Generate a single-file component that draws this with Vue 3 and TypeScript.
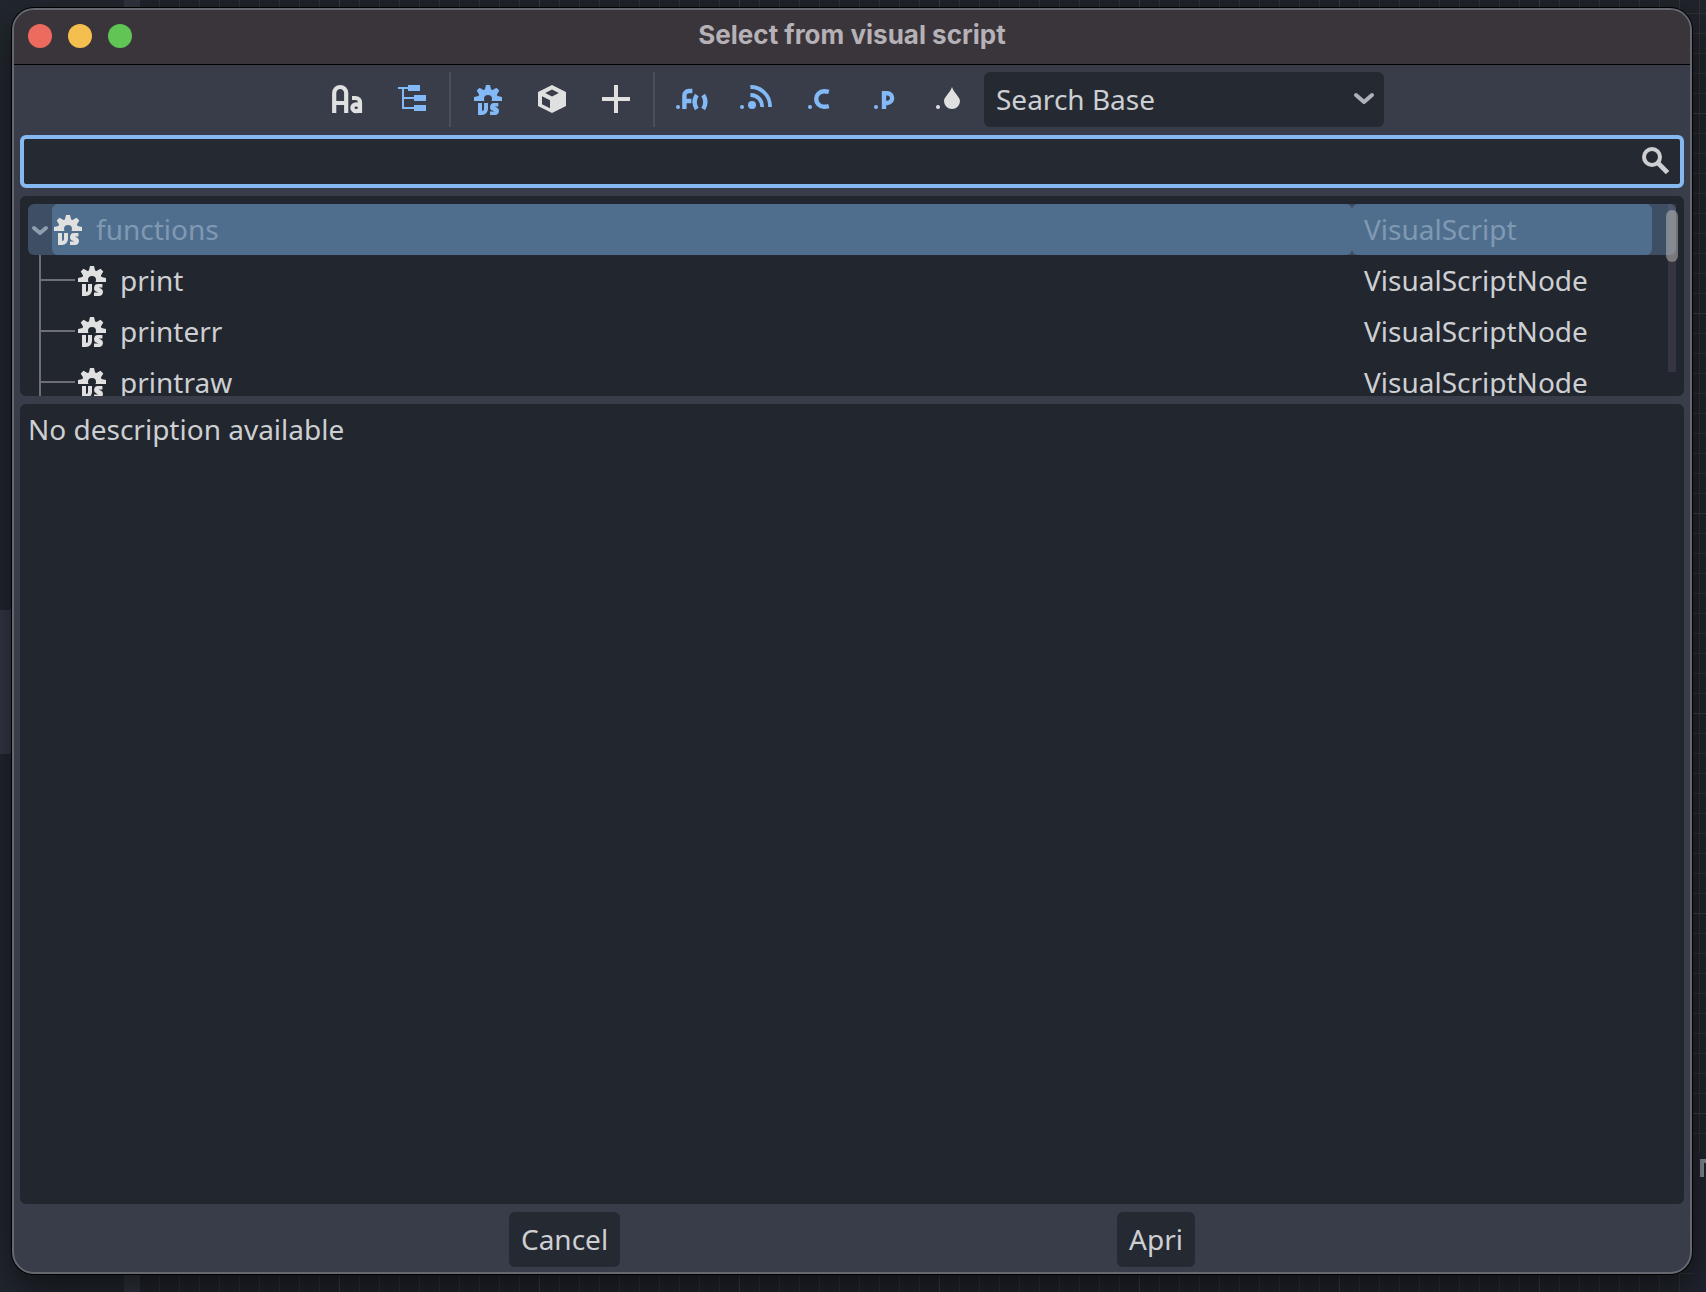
<script setup lang="ts">
import { ref } from 'vue'

interface TreeItem {
  name: string
  type: string
}

interface ToolIcon {
  label: string
  active: boolean
  fill?: string
  stroke?: string
  width?: number
  dot?: number
}

const gear =
  'M7 1l-.56 2.26a5 5 0 0 0-.69.28L3.76 2.34 2.35 3.76l1.19 1.99a5 5 0 0 0-.28.69L1 7v2h5.27A2 2 0 0 1 6 8a2 2 0 0 1 4 0 2 2 0 0 1-.27 1H15V7l-2.26-.56a5 5 0 0 0-.28-.69l1.2-1.99-1.42-1.41-1.99 1.19a5 5 0 0 0-.69-.28L9 1z' +
  'M3 10v6h2a3 3 0 0 0 3-3v-3H6v3a1 1 0 0 1-1 1v-4z' +
  'M13.2 10H11a2 2 0 0 0-.6 3.9l.9.3H9V16h2.5a2 2 0 0 0 .6-3.9l-.8-.3h1.9z'

const groups: ToolIcon[][] = [
  [
    {
      label: 'Match case',
      active: false,
      stroke: 'M1.1 15V5a3 3 0 0 1 6 0v10M1.1 10h6M10 7.5h1.8a2.2 2.2 0 0 1 2.2 2.2V15M14 12.4a1.8 1.6 0 1 1-3.8 0 1.8 1.6 0 1 1 3.8 0',
      width: 2.1,
    },
    {
      label: 'Inherited',
      active: true,
      fill: 'M1 2h5V1h6v3H6V3H4v4h5V6h6v3H9V8H4v4h5v-1h6v3H9v-1H3V3H1z',
    },
  ],
  [
    { label: 'Visual script nodes', active: true, fill: gear },
    {
      label: 'Classes',
      active: false,
      fill: 'M8 1l7 3.5v7L8 15l-7-3.5v-7zM8 3.3L4.6 5 8 6.7 11.4 5zM3 6.6v4l4 2v-4z',
    },
    { label: 'Operators', active: false, fill: 'M7 1h2v6h6v2H9v6H7V9H1V7h6z' },
  ],
  [
    {
      label: 'Methods',
      active: true,
      dot: 1,
      stroke: 'M4.2 13V6.2A2.2 2.2 0 0 1 6.4 4H8.2M4 9h3.7M10.4 6Q8.2 9.5 10.4 13M13.6 6Q15.8 9.5 13.6 13',
      width: 2.2,
    },
    {
      label: 'Signals',
      active: true,
      dot: 1,
      fill: 'M6 9a2 2 0 1 0 0 4 2 2 0 0 0 0-4z',
      stroke: 'M5.2 6A5.6 5.6 0 0 1 11 12M5.2 2A9.6 9.6 0 0 1 15 12',
      width: 1.9,
    },
    {
      label: 'Constants',
      active: true,
      dot: 3,
      stroke: 'M12.4 4.4Q11.4 4.1 10 4.1a3.9 3.9 0 0 0 0 7.8q1.4 0 2.4-.3',
      width: 2.2,
    },
    {
      label: 'Properties',
      active: true,
      dot: 4,
      stroke: 'M8 13V5.1h1.6a2.3 2.3 0 0 1 0 4.9H8',
      width: 2.2,
    },
    {
      label: 'Theme items',
      active: false,
      dot: 3,
      fill: 'M10 2C9 5 6 7 6 9a4 4 0 0 0 8 0c0-2-3-4-4-7z',
    },
  ],
]

const items: TreeItem[] = [
  { name: 'print', type: 'VisualScriptNode' },
  { name: 'printerr', type: 'VisualScriptNode' },
  { name: 'printraw', type: 'VisualScriptNode' },
]

const query = ref('')
const scope = ref('Search Base')
</script>

<template>
  <div class="desktop">
    <div class="side-panel"></div>
    <div class="graph-node"><span></span></div>

    <main class="window">
      <header class="titlebar">
        <div class="lights">
          <button class="light close" type="button" aria-label="Close"></button>
          <button class="light minimise" type="button" aria-label="Minimise"></button>
          <button class="light expand" type="button" aria-label="Zoom"></button>
        </div>
        <h1>Select from visual script</h1>
      </header>

      <div class="content">
        <div class="toolbar">
          <template v-for="(group, g) in groups" :key="g">
            <span v-if="g > 0" class="separator"></span>
            <button
              v-for="tool in group"
              :key="tool.label"
              type="button"
              class="tool"
              :class="{ active: tool.active }"
              :aria-label="tool.label"
              :aria-pressed="tool.active"
            >
              <svg class="icon" viewBox="0 0 16 16">
                <circle v-if="tool.dot" :cx="tool.dot" cy="12" r="1" fill="currentColor" />
                <path v-if="tool.fill" :d="tool.fill" fill="currentColor" fill-rule="evenodd" />
                <path
                  v-if="tool.stroke"
                  :d="tool.stroke"
                  fill="none"
                  stroke="currentColor"
                  :stroke-width="tool.width"
                />
              </svg>
            </button>
          </template>
          <div class="scope">
            <select v-model="scope" aria-label="Search scope">
              <option>Search Base</option>
            </select>
            <svg class="scope-arrow" viewBox="0 0 24 24">
              <path d="M4 8l8 7 8-7" fill="none" stroke="currentColor" stroke-width="4" stroke-linecap="round" stroke-linejoin="round" />
            </svg>
          </div>
        </div>

        <label class="search">
          <input v-model="query" type="text" aria-label="Search" />
          <svg class="icon" viewBox="0 0 16 16">
            <g fill="none" stroke="currentColor" stroke-width="2">
              <circle cx="6" cy="6" r="4" />
              <path d="M8.8 8.8l5 5" stroke-width="2.4" />
            </g>
          </svg>
        </label>

        <section class="tree">
          <table>
            <tbody>
              <tr class="selected">
                <td>
                  <div class="entry">
                    <span class="fold">
                      <svg viewBox="0 0 24 24">
                        <path d="M6 10l6 5 6-5" fill="none" stroke="currentColor" stroke-width="4" stroke-linecap="round" stroke-linejoin="round" />
                      </svg>
                    </span>
                    <span class="name">
                      <svg class="icon" viewBox="0 0 16 16"><path :d="gear" fill="currentColor" /></svg>
                      functions
                    </span>
                  </div>
                </td>
                <td class="type"><div>VisualScript</div></td>
              </tr>
              <tr v-for="item in items" :key="item.name">
                <td>
                  <div class="entry">
                    <span class="guide"></span>
                    <span class="name">
                      <svg class="icon" viewBox="0 0 16 16"><path :d="gear" fill="currentColor" /></svg>
                      {{ item.name }}
                    </span>
                  </div>
                </td>
                <td class="type"><div>{{ item.type }}</div></td>
              </tr>
            </tbody>
          </table>
          <div class="scrollbar"><span></span></div>
        </section>

        <section class="description">No description available</section>

        <footer class="actions">
          <button type="button">Cancel</button>
          <button type="button">Apri</button>
        </footer>
      </div>
    </main>
  </div>
</template>

<style>
body {
  margin: 0;
  background: #20242b;
}
</style>

<style scoped>
* {
  box-sizing: border-box;
}

.desktop {
  position: relative;
  display: flex;
  min-height: 100vh;
  padding: 8px 14px 18px 12px;
  overflow: hidden;
  color: #cdcfd2;
  font: 28px/38px "Noto Sans", sans-serif;
  background-color: #20242b;
  background-image:
    linear-gradient(90deg, #22272f 124px, #31343f 124px, #31343f 140px, transparent 140px),
    linear-gradient(90deg, #3a3d43 1px, transparent 1px),
    linear-gradient(#3a3d43 1px, transparent 1px),
    linear-gradient(90deg, #2f3238 1px, transparent 1px),
    linear-gradient(#2f3238 1px, transparent 1px);
  background-size: 100% 100%, 200px 200px, 200px 200px, 20px 20px, 20px 20px;
  background-position: 0 0, 139px 0, 0 113px, 19px 0, 0 13px;
}

.side-panel {
  position: absolute;
  top: 610px;
  left: 0;
  width: 12px;
  height: 144px;
  background: #333846;
}

.graph-node {
  position: absolute;
  top: 1152px;
  right: 0;
  bottom: 0;
  width: 12px;
  padding: 7px 0 0 6px;
  background: #20242f;
}

.graph-node span {
  display: block;
  height: 18px;
  border: solid #83868b;
  border-width: 4px 0 0 4px;
}

.window {
  position: relative;
  display: flex;
  flex: 1;
  flex-direction: column;
  min-width: 0;
  border: 2px solid #656870;
  border-radius: 22px;
  background: #383d49;
  box-shadow: 0 0 0 1px #000, 0 16px 40px rgba(0, 0, 0, 0.55);
}

.titlebar {
  display: grid;
  grid-template-columns: 1fr auto 1fr;
  align-items: center;
  height: 55px;
  padding: 0 14px 2px;
  border-bottom: 1px solid #000;
  border-radius: 20px 20px 0 0;
  background: #3a353b;
}

.titlebar h1 {
  margin: 0;
  padding-bottom: 2px;
  color: #b5b1b6;
  font: 700 26px/32px Inter, sans-serif;
}

.lights {
  display: flex;
  gap: 16px;
}

.light {
  width: 24px;
  height: 24px;
  padding: 0;
  border: 0;
  border-radius: 50%;
}

.close {
  background: #ed6a5f;
}

.minimise {
  background: #f5bf4f;
}

.expand {
  background: #61c555;
}

.content {
  display: flex;
  flex: 1;
  flex-direction: column;
  gap: 8px;
  padding: 7px 6px 5px;
}

.toolbar {
  display: flex;
  justify-content: center;
  gap: 8px;
  height: 55px;
}

.tool {
  display: flex;
  align-items: center;
  justify-content: center;
  width: 56px;
  padding: 0 0 1px;
  border: 0;
  color: #e0e0e0;
  background: none;
}

.tool.active {
  color: #84b9f7;
}

.icon {
  flex: none;
  width: 32px;
  height: 32px;
  overflow: visible;
}

.separator {
  width: 4px;
  border: solid transparent;
  border-width: 0 1px;
  background: #4a4f5a content-box;
}

.scope {
  position: relative;
  width: 400px;
}

.scope select {
  width: 100%;
  height: 100%;
  padding: 0 48px 2px 12px;
  border: 0;
  border-radius: 6px;
  appearance: none;
  color: inherit;
  background: #252932;
  font: inherit;
}

.scope-arrow {
  position: absolute;
  top: 15px;
  right: 8px;
  width: 24px;
  height: 24px;
  color: #aeb1b6;
  pointer-events: none;
}

.search {
  display: flex;
  align-items: center;
  height: 53px;
  padding: 0 8px 1px;
  border: 4px solid #84b9f2;
  border-radius: 6px;
  color: #cdcfd2;
  background: #252932;
}

.search input {
  flex: 1;
  min-width: 0;
  padding: 0;
  border: 0;
  outline: 0;
  color: inherit;
  background: none;
  font: inherit;
}

.tree {
  position: relative;
  height: 200px;
  padding: 8px 8px 0;
  overflow: hidden;
  border-radius: 6px;
  background: #22262e;
}

table {
  width: 100%;
  border-collapse: collapse;
  table-layout: fixed;
}

td {
  height: 51px;
  padding: 0;
}

.type {
  width: 324px;
}

.type div {
  width: 300px;
  padding: 0 12px;
  line-height: 51px;
}

.entry {
  display: flex;
  height: 51px;
}

.name {
  display: flex;
  flex: 1;
  align-items: center;
  gap: 12px;
  padding-bottom: 1px;
}

.name .icon {
  color: #e0e0e0;
}

.fold {
  display: flex;
  align-items: center;
  width: 24px;
  color: #8b9fae;
}

.guide {
  width: 36px;
  margin-left: 11px;
  margin-right: 1px;
  border-left: 2px solid #6c7076;
  background: linear-gradient(#6c7076, #6c7076) 0 24px / 100% 2px no-repeat;
}

.selected td:first-child {
  border-radius: 6px 0 0 6px;
  background: #3e4f65;
}

.selected td:last-child {
  border-radius: 0 6px 6px 0;
  background: #3e4f65;
}

.selected .name,
.selected .type div {
  border-radius: 6px;
  color: #8099b3;
  background: #4f6e8e;
}

.scrollbar {
  position: absolute;
  top: 8px;
  right: 6px;
  width: 12px;
  height: 168px;
  padding-top: 6px;
  background: linear-gradient(rgba(130, 115, 140, 0.2), rgba(130, 115, 140, 0.2)) center / 8px 100% no-repeat;
}

.scrollbar span {
  display: block;
  height: 52px;
  border-radius: 6px;
  background: rgba(190, 190, 185, 0.5);
}

.description {
  flex: 1;
  padding: 6px 8px;
  border-radius: 6px;
  background: #22262e;
}

.actions {
  display: flex;
  justify-content: space-evenly;
  gap: 8px;
}

.actions button {
  height: 55px;
  padding: 0 12px 2px;
  border: 0;
  border-radius: 6px;
  color: inherit;
  background: #252932;
  font: inherit;
}
</style>
